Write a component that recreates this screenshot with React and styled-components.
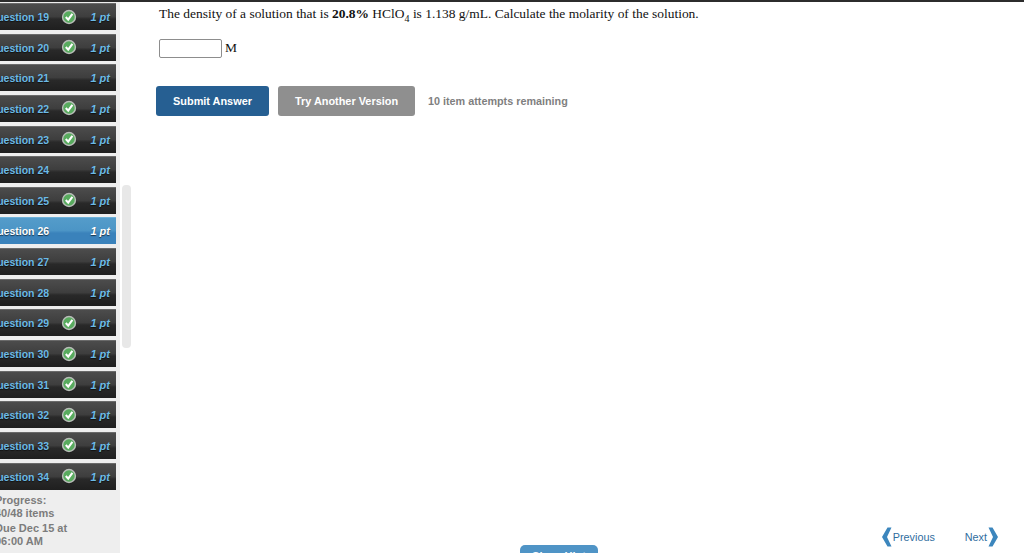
import React from 'react'
import styled, { createGlobalStyle } from 'styled-components'

const GlobalStyle = createGlobalStyle`
  html, body {
    margin: 0;
    height: 100%;
    overflow: hidden;
    background: #fff;
  }
  #root {
    height: 553px;
  }
`

const Page = styled.div`
  position: relative;
  display: flex;
  width: 1024px;
  height: 553px;
  overflow: hidden;
  font-family: "Liberation Sans", Arial, sans-serif;
  background: #fff;

  &::before {
    content: "";
    position: absolute;
    top: 0;
    left: 0;
    right: 0;
    height: 2px;
    background: #2c2c2c;
  }
`

const Sidebar = styled.aside`
  flex: 0 0 120px;
  box-sizing: border-box;
  padding-top: 3px;
  background: #eeeeee;
  overflow: hidden;
`

const QuestionList = styled.ul`
  list-style: none;
  margin: 0;
  padding: 0;
  display: flex;
  flex-direction: column;
  gap: 3.65px;
`

const Row = styled.li`
  display: flex;
  align-items: center;
  box-sizing: border-box;
  width: 116px;
  height: 27px;
  border-top: 1px solid ${p => (p.$active ? '#6db0d8' : '#6a6a6a')};
  background: ${p =>
    p.$active
      ? 'linear-gradient(#549cca 0%, #4c95c6 48%, #3a82bb 58%, #3a82bb 100%)'
      : 'linear-gradient(#4c4c4c 0%, #3e3e3e 48%, #292929 58%, #1f1f1f 100%)'};
  font-size: 11px;
  font-weight: bold;
  color: ${p => (p.$active ? '#fff' : '#6cbae6')};
`

const RowLabel = styled.span`
  flex: 0 0 auto;
  box-sizing: border-box;
  width: 62px;
  margin-left: -11px;
  font-size: 10.5px;
  white-space: nowrap;
  text-shadow: 0 1px 1px rgba(0, 0, 0, 0.6);
`

const CheckSlot = styled.span`
  display: flex;
  flex: 0 0 16px;
  margin: -1px 0 0 10px;
`

const Points = styled.span`
  margin-left: auto;
  padding-right: 6px;
  font-style: italic;
  text-shadow: 0 1px 1px rgba(0, 0, 0, 0.6);
`

const Status = styled.div`
  margin: 4px 0 0 -5px;
  font-size: 11px;
  font-weight: bold;
  line-height: 13px;
  color: #7c7c7c;
`

const StatusBlock = styled.p`
  margin: 0 0 2px;
  white-space: nowrap;
`

const Scrollbar = styled.div`
  position: absolute;
  left: 122px;
  top: 185px;
  width: 9px;
  height: 163px;
  border-radius: 4px;
  background: #e8e8e8;
`

const Main = styled.main`
  flex: 1;
  display: flex;
  flex-direction: column;
  padding-top: 6px;
`

const Question = styled.p`
  margin: 0 0 0 39px;
  font-family: "Liberation Serif", "Times New Roman", serif;
  font-size: 13.46px;
  line-height: 15px;
  color: #111;
  white-space: nowrap;

  sub {
    font-size: 10px;
    line-height: 0;
  }
`

const AnswerRow = styled.div`
  display: flex;
  align-items: center;
  gap: 3px;
  margin: 18px 0 0 39px;
  font-family: "Liberation Serif", "Times New Roman", serif;
  font-size: 13.5px;
  color: #111;
`

const AnswerInput = styled.input`
  box-sizing: border-box;
  width: 63px;
  height: 19px;
  margin: 0;
  padding: 0;
  border: 1px solid #8d8d8d;
  border-radius: 2px;
  background: #fff;
`

const Unit = styled.span`
  margin-bottom: 2px;
`

const Actions = styled.div`
  display: flex;
  align-items: center;
  margin: 28px 0 0 36px;
`

const Button = styled.button`
  box-sizing: border-box;
  height: 30px;
  margin: 0 9px 0 0;
  padding: 0;
  width: ${p => p.$width}px;
  border: 0;
  border-radius: 3px;
  background: ${p => p.$bg};
  color: #fff;
  font-family: inherit;
  font-size: 10.9px;
  font-weight: bold;
`

const Attempts = styled.span`
  margin-left: 4px;
  font-size: 10.8px;
  font-weight: bold;
  color: #7f7f7f;
`

const Footer = styled.div`
  display: flex;
  align-items: center;
  justify-content: flex-end;
  margin: auto 26px 6px 0;
  font-size: 10.8px;
  color: #2f6d9e;
`

const NavLink = styled.a`
  display: flex;
  align-items: center;
  gap: 1px;
  margin-left: ${p => p.$gap || 0}px;
`

const HintTab = styled.button`
  position: absolute;
  left: 520px;
  top: 545px;
  display: flex;
  justify-content: center;
  width: 78px;
  height: 24px;
  padding: 5px 0 0;
  border: 0;
  border-radius: 5px 5px 0 0;
  background: #4f94c6;
  color: #fff;
  font-family: inherit;
  font-size: 11px;
  font-weight: bold;
  line-height: 13px;
`

const CheckIcon = () => (
  <svg width="16" height="16" viewBox="0 0 16 16">
    <circle cx="8" cy="8.4" r="7.6" fill="#161616" opacity="0.45" />
    <circle cx="8" cy="8" r="7.2" fill="#b8bdb8" />
    <circle cx="8" cy="8" r="5.7" fill="#58ab5e" />
    <path d="M4.8 8 L7.2 10.6 L11.4 4.8" fill="none" stroke="#fff" strokeWidth="2.1" />
  </svg>
)

const Chevron = ({ left }) => (
  <svg width="10" height="20" viewBox="0 0 10 20">
    <path
      d={left ? 'M5.5 0.5 H9.5 L5 10 L9.5 19.5 H5.5 L0 10 Z' : 'M4.5 0.5 H0.5 L5 10 L0.5 19.5 H4.5 L10 10 Z'}
      fill="#3c86bd"
    />
  </svg>
)

const questions = [
  { n: 19, done: true },
  { n: 20, done: true },
  { n: 21 },
  { n: 22, done: true },
  { n: 23, done: true },
  { n: 24 },
  { n: 25, done: true },
  { n: 26, active: true },
  { n: 27 },
  { n: 28 },
  { n: 29, done: true },
  { n: 30, done: true },
  { n: 31, done: true },
  { n: 32, done: true },
  { n: 33, done: true },
  { n: 34, done: true },
]

export default function App() {
  return (
    <Page>
      <GlobalStyle />
      <Sidebar>
        <QuestionList>
          {questions.map(q => (
            <Row key={q.n} $active={q.active}>
              <RowLabel>Question {q.n}</RowLabel>
              <CheckSlot>{q.done && <CheckIcon />}</CheckSlot>
              <Points>1 pt</Points>
            </Row>
          ))}
        </QuestionList>
        <Status>
          <StatusBlock>
            Progress:
            <br />
            40/48 items
          </StatusBlock>
          <StatusBlock>
            Due Dec 15 at
            <br />
            06:00 AM
          </StatusBlock>
        </Status>
      </Sidebar>
      <Scrollbar />
      <Main>
        <Question>
          The density of a solution that is <b>20.8%</b> HClO<sub>4</sub> is 1.138 g/mL. Calculate the molarity of the solution.
        </Question>
        <AnswerRow>
          <AnswerInput />
          <Unit>M</Unit>
        </AnswerRow>
        <Actions>
          <Button $width={113} $bg="#265f92">Submit Answer</Button>
          <Button $width={137} $bg="#8f8f8f">Try Another Version</Button>
          <Attempts>10 item attempts remaining</Attempts>
        </Actions>
        <Footer>
          <NavLink>
            <Chevron left />
            Previous
          </NavLink>
          <NavLink $gap={30}>
            Next
            <Chevron />
          </NavLink>
        </Footer>
      </Main>
      <HintTab>Show Hint</HintTab>
    </Page>
  )
}
